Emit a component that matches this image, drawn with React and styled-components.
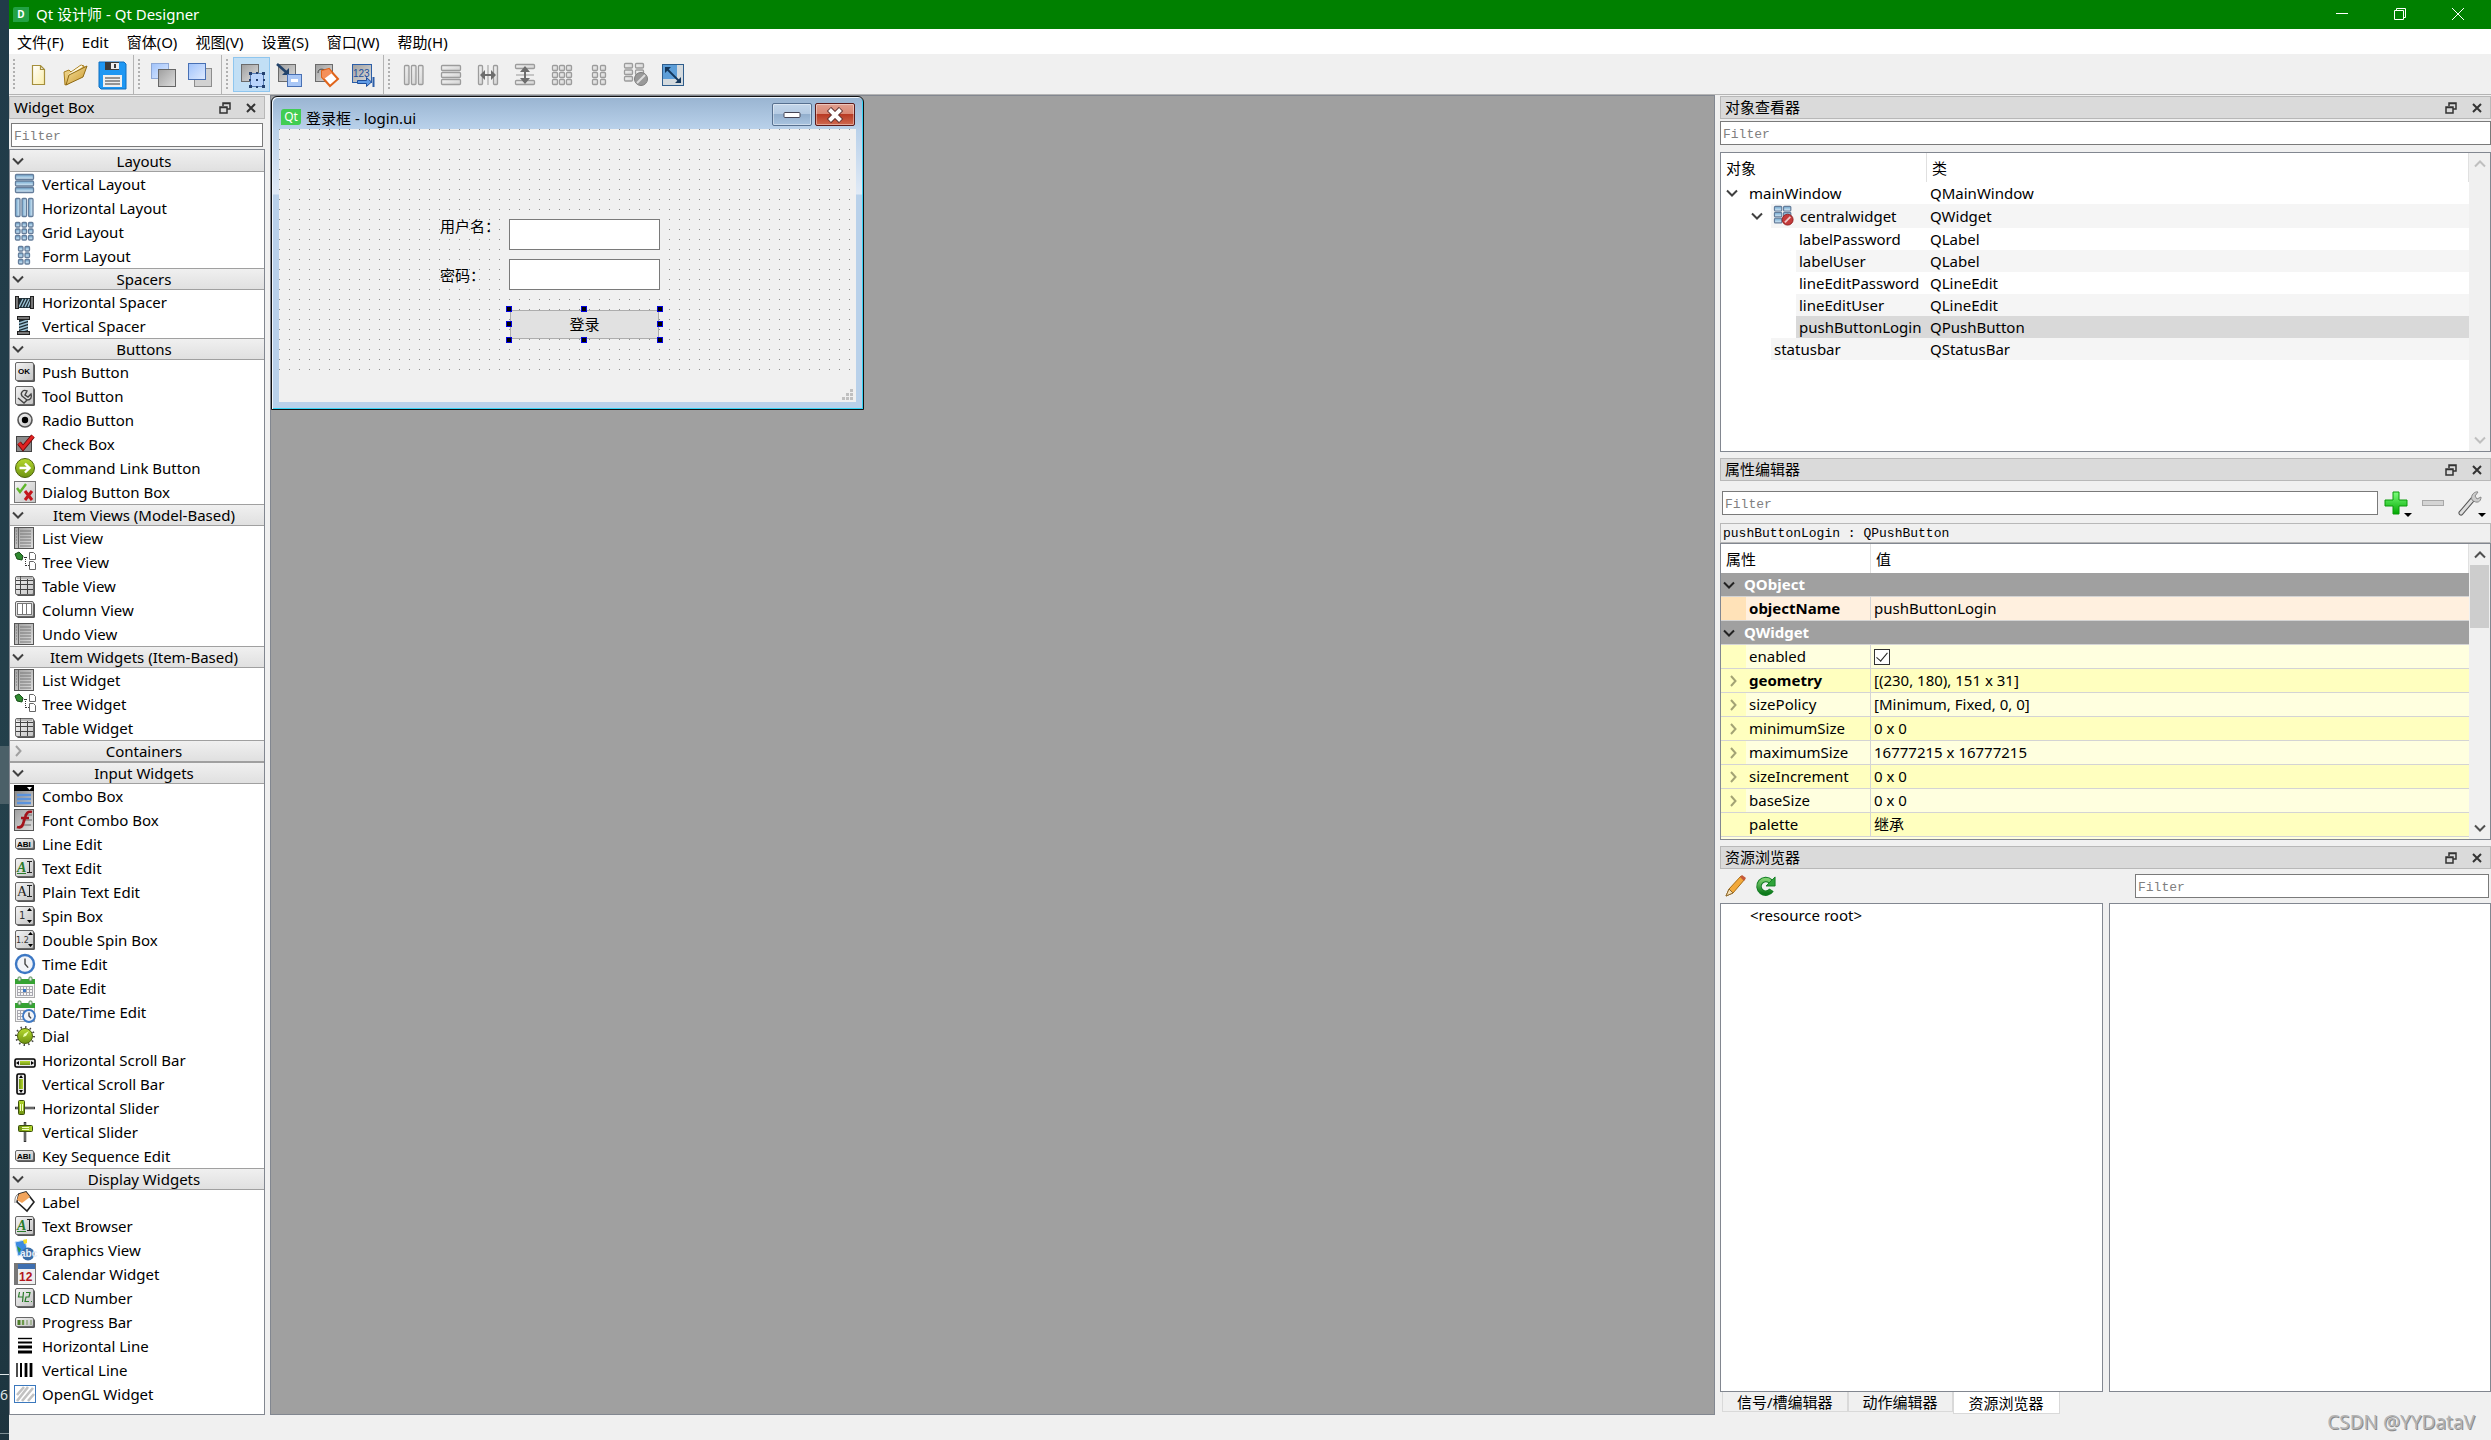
import React from "react";
import styled, { createGlobalStyle, css } from "styled-components";

const UI = `"Noto Sans", "Noto Sans CJK SC", sans-serif`;
const MONO = `"Liberation Mono", "Noto Sans CJK SC", monospace`;

const GlobalStyle = createGlobalStyle`
  * { box-sizing: border-box; }
  body { margin: 0; background: #f0f0f0; font: 15px/22px ${UI}; color: #000; }
  button, input { font: inherit; color: inherit; margin: 0; }
  button { border: 0; padding: 0; background: none; text-align: left; white-space: nowrap; }
  ul { list-style: none; margin: 0; padding: 0; }
  h2, h3 { margin: 0; font: inherit; }
  svg { display: block; flex: none; }
`;

/* ---------- icons ---------- */

const stops = (id, a, b, x2 = 0, y2 = 1) => (
  <linearGradient id={id} key={id} x1="0" y1="0" x2={x2} y2={y2}>
    <stop offset="0" stopColor={a} />
    <stop offset="1" stopColor={b} />
  </linearGradient>
);

const HiddenSvg = styled.svg`
  position: absolute;
  width: 0;
  height: 0;
`;

const Gradients = () => (
  <HiddenSvg aria-hidden="true">
    <defs>
      {stops("gBlue", "#6fa6ce", "#dcecf7")}
      {stops("gBlueH", "#6fa6ce", "#dcecf7", 1, 0)}
      {stops("gGrey", "#f4f4f4", "#c4c4c4", 1, 1)}
      {stops("gDark", "#7b7b7b", "#cfcfcf", 1, 1)}
      {stops("gPlate", "#9f9f9f", "#dedede", 1, 1)}
      {stops("gSoft", "#9fc2fb", "#e0ebfe", 1, 1)}
      {stops("gLime", "#b5d92f", "#6f9312")}
      {stops("gPaper", "#ffffff", "#fbeeaa", 1, 1)}
      {stops("gFolder", "#f7e3a0", "#c9962a", 1, 1)}
      {stops("gPlus", "#7dff7d", "#00a800")}
      {stops("gReload", "#7ccf6e", "#0e7a1c")}
      {stops("gOff", "#f6f6f6", "#d0d0d0", 1, 1)}
    </defs>
  </HiddenSvg>
);

const cells = (xs, ys, w, h, fill, stroke) =>
  xs.flatMap((x) =>
    ys.map((y) => (
      <rect key={`${x}-${y}`} x={x} y={y} width={w} height={h} rx="1" fill={fill} stroke={stroke} strokeWidth="1.300" />
    ))
  );

const Key = ({ y = 2, h = 18, children }) => (
  <>
    <rect x="3" y={y + 1} width="18" height={h} rx="1.5" fill="#555" />
    <rect x="1.5" y={y - 0.5} width="18" height={h} rx="1.5" fill="url(#gGrey)" stroke="#666" />
    {children}
  </>
);

const Txt = ({ x, y, s, f, c = "#000", w, i, children }) => (
  <text x={x} y={y} fontSize={s} fontFamily={f || "Liberation Sans"} fill={c} fontWeight={w} fontStyle={i}>
    {children}
  </text>
);

const Sheet = () => (
  <>
    <rect x="0.5" y="0.5" width="19" height="21" fill="url(#gPlate)" stroke="#555" />
    <path d="M4.5 1v20" stroke="#666" />
    <path d="M2 4h1M2 7h1M2 10h1M2 13h1M2 16h1M6 4h11M6 7h11M6 10h11M6 13h11M6 16h11M6 19h11" stroke="#777" />
  </>
);

const Calendar = () => (
  <>
    <rect x="1.5" y="3.5" width="19" height="17" fill="#f6f6f6" stroke="#aaa" />
    <rect x="1" y="2" width="20" height="5" fill="#35a333" />
    <rect x="4" y="0" width="3" height="4" rx="1" fill="#dff0df" stroke="#5a8a5a" />
    <rect x="15" y="0" width="3" height="4" rx="1" fill="#dff0df" stroke="#5a8a5a" />
    <path d="M3.500 9v10M6.500 9v10M9.500 9v10M12.500 9v10M15.500 9v10M18.500 9v10M3 9.500h16M3 12.500h16M3 15.500h16M3 18.500h16" stroke="#a8a8b0" />
  </>
);

const Clock = ({ cx = 11, cy = 11, r = 9 }) => (
  <>
    <circle cx={cx} cy={cy} r={r} fill="#f2f4f8" stroke="#3d78c4" strokeWidth={r > 7 ? 2.4 : 1.8} />
    <path d={`M${cx} ${cy - r * 0.6}V${cy}l${r * 0.35} ${r * 0.4}`} fill="none" stroke="#444" strokeWidth="1.4" />
  </>
);

const Slider = () => (
  <>
    <path d="M1 11h20" stroke="#333" strokeWidth="2.5" />
    <path d="M2 11h18" stroke="#999" />
    <rect x="4.500" y="3.500" width="6" height="14" rx="1" fill="url(#gLime)" stroke="#3b4f0c" />
    <path d="M6.500 7v7M8.500 7v7" stroke="#f2ffc2" />
  </>
);

const ScrollH = () => (
  <>
    <rect x="1" y="7" width="20" height="8" rx="1.500" fill="#e8e8e8" stroke="#000" strokeWidth="1.600" />
    <path d="M5 9v4l-3-2zM17 9v4l3-2z" fill="#000" />
    <rect x="6" y="9" width="10" height="4" fill="url(#gLime)" />
  </>
);

const Abi = () => (
  <Key y={6} h={10}>
    <Txt x={3} y={14} s={8} w={700}>ABI</Txt>
  </Key>
);

const Plate = () => <rect x="0.500" y="0.500" width="17" height="17" fill="url(#gPlate)" stroke="#6b6b6b" />;

const Off = "url(#gOff)";
const OffS = "#9c9c9c";
const BS = "#647d9b";

const ICONS = {
  vlayout: () => cells([1.5], [1.5, 8, 14.5], 18, 5, "url(#gBlue)", BS),
  hlayout: () => cells([1.5, 8, 14.5], [1.5], 4.5, 18, "url(#gBlueH)", BS),
  grid: () => cells([1.5, 8, 14.5], [1.5, 8, 14.5], 4.5, 4.5, "url(#gBlue)", BS),
  form: () => cells([4.5, 11], [1.5, 8, 14.5], 4.5, 4.5, "url(#gBlue)", BS),
  hspacer: () => (
    <>
      <path d="M4 7h13v10H4z" fill="#1c2b33" />
      <path d="M5 16l4-8M8 16l4-8M11 16l4-8M14 16l3-7" stroke="#9cc3d6" strokeWidth="1.4" />
      <rect x="1.500" y="5.500" width="3" height="12" fill="#777" stroke="#222" />
      <rect x="16.500" y="5.500" width="3" height="12" fill="#777" stroke="#222" />
    </>
  ),
  vspacer: () => (
    <>
      <path d="M5 4h9v13H5z" fill="#1c2b33" />
      <path d="M5 8l9-3M5 11l9-3M5 14l9-3M5 17l9-3" stroke="#9cc3d6" strokeWidth="1.4" />
      <rect x="3.500" y="1.500" width="12" height="3" fill="#777" stroke="#222" />
      <rect x="3.500" y="16.500" width="12" height="3" fill="#777" stroke="#222" />
    </>
  ),
  push: () => <Key><Txt x={4} y={13} s={8} w={700}>OK</Txt></Key>,
  tool: () => (
    <Key>
      <path d="M4 13l6 5 3-3-5-4M13 15c4 0 5-3 4-6l-3 3-3-2 2-4c-4-2-7 2-5 5" fill="#ddd" stroke="#444" strokeWidth="1.400" />
    </Key>
  ),
  radio: () => (
    <>
      <circle cx="11" cy="11" r="7" fill="url(#gGrey)" stroke="#555" strokeWidth="1.6" />
      <circle cx="11" cy="11" r="3.200" fill="#000" />
    </>
  ),
  check: () => (
    <>
      <rect x="2.500" y="3.500" width="15" height="15" fill="#8c8c8c" stroke="#444" />
      <path d="M5 10l4 5 10-12" fill="none" stroke="#6d0a0a" strokeWidth="4.600" />
      <path d="M5 10l4 5 10-12" fill="none" stroke="#e02222" strokeWidth="3" />
    </>
  ),
  command: () => (
    <>
      <circle cx="11" cy="11" r="9.500" fill="url(#gLime)" stroke="#4c620c" />
      <path d="M5.500 11h10M11 6.500l4.500 4.500-4.500 4.500" fill="none" stroke="#fff" strokeWidth="2.400" />
    </>
  ),
  dialog: () => (
    <>
      <rect x="0.500" y="0.500" width="21" height="21" fill="url(#gGrey)" stroke="#777" />
      <path d="M3 7l3 4 6-8" fill="none" stroke="#5fb52c" strokeWidth="2.400" />
      <path d="M11 10l7 9M18 10l-7 9" stroke="#c4161c" strokeWidth="3" />
    </>
  ),
  list: Sheet,
  tree: () => (
    <>
      <path d="M1 3l4-2 4 4-1 4-5-1z" fill="#2f8a2f" stroke="#174d17" />
      <path d="M11.500 6v9M8 6.500h6M12 14.500h3" stroke="#333" strokeDasharray="1 1" />
      <path d="M15.500 1.500h4l2 2v5h-6zM15.500 10.500h4l2 2v6h-6z" fill="#fff" stroke="#666" />
    </>
  ),
  table: () => (
    <Key>
      <path d="M2 5.500h17M2 9.500h17M2 14.500h17M6.500 1v18M13.500 4v15" stroke="#444" />
      <path d="M3 3h15" stroke="#888" />
    </Key>
  ),
  column: () => (
    <Key y={3} h={15}>
      <rect x="3.500" y="4.500" width="14" height="11" fill="#fff" stroke="#777" />
      <path d="M8.500 5v10M12.500 5v10" stroke="#777" />
    </Key>
  ),
  combo: () => (
    <>
      <rect x="0.500" y="0.500" width="19" height="21" fill="url(#gDark)" stroke="#555" />
      <path d="M0 0h20v6H0z" fill="#000" />
      <path d="M13 2h5l-2.500 3z" fill="#fff" />
      <path d="M3 10h14M3 14h14M3 18h14" stroke="#5b93dd" strokeWidth="2.400" />
    </>
  ),
  fontcombo: () => (
    <>
      <rect x="0.500" y="0.500" width="19" height="21" fill="url(#gPlate)" stroke="#555" />
      <path d="M10 6h8M8 11h10M9 16h8" stroke="#999" strokeWidth="2" />
      <path d="M18 3c-4-1-6 1-7 6l-2 6c-1 3-3 4-6 3M7 9h8" fill="none" stroke="#a3121a" strokeWidth="2.600" />
    </>
  ),
  line: Abi,
  text: () => (
    <Key>
      <Txt x={3} y={15} s={14} f="Liberation Serif" c="#2a7a2a" w={700} i="italic">A</Txt>
      <path d="M3 16.500h9" stroke="#2a7a2a" />
      <path d="M13 4.500h5M15.500 5v10M13 15.500h5" stroke="#222" />
    </Key>
  ),
  plain: () => (
    <Key>
      <Txt x={3} y={15} s={14} f="Liberation Serif" c="#222">A</Txt>
      <path d="M13 4.500h5M15.500 5v10M13 15.500h5" stroke="#222" />
    </Key>
  ),
  spin: () => (
    <Key>
      <Txt x={5} y={14} s={10} f="DejaVu Sans" c="#333">1</Txt>
      <path d="M13 6h5l-2.500-3zM13 15h5l-2.500 3z" />
    </Key>
  ),
  dspin: () => (
    <Key>
      <Txt x={2} y={14} s={8} f="DejaVu Sans" c="#333">1.2</Txt>
      <path d="M14 6h5l-2.500-3zM14 15h5l-2.500 3z" />
    </Key>
  ),
  time: () => <Clock />,
  date: () => (
    <>
      <Calendar />
      <rect x="9" y="12" width="3" height="3" fill="#3d78c4" />
    </>
  ),
  datetime: () => (
    <>
      <Calendar />
      <Clock cx={15} cy={15} r={6} />
    </>
  ),
  dial: () => (
    <>
      <circle cx="11" cy="11" r="9" fill="none" stroke="#444" strokeWidth="2" strokeDasharray="1.400 3.300" />
      <circle cx="11" cy="11" r="7.500" fill="url(#gLime)" stroke="#4c620c" />
      <path d="M9 12l1-3 5-3-3 5z" fill="#eaffb0" />
    </>
  ),
  hscroll: () => <g transform="translate(0 3)"><ScrollH /></g>,
  vscroll: () => <g transform="rotate(90 11 11) translate(0 4)"><ScrollH /></g>,
  hslider: Slider,
  vslider: () => <g transform="rotate(90 11 11)"><Slider /></g>,
  label: () => (
    <>
      <path d="M1 12C0 4 5 1 9 3" fill="none" stroke="#888" />
      <path d="M5 3l7-2 8 10-7 9-10-9z" fill="#fff" stroke="#222" strokeWidth="1.600" />
      <path d="M5 3l7-2 4 5-8 6-5-3z" fill="#f2a45c" />
    </>
  ),
  graphics: () => (
    <>
      <path d="M1 3l10-2 3 13-10 3z" fill="#3c8be0" stroke="#c9dff6" />
      <path d="M9 1l4-1v4l-3 1z" fill="#f4dc2c" />
      <path d="M3 7l4 3-2 4z" fill="#2f9a3a" />
      <circle cx="14" cy="15" r="6.500" fill="#3a6ea8" />
      <Txt x={6} y={18} s={10} c="#e8f0fa" w={700}>abc</Txt>
    </>
  ),
  calendar: () => (
    <>
      <rect x="0.500" y="0.500" width="21" height="21" fill="#efefef" stroke="#777" />
      <path d="M1 1h3v20H1z" fill="#777" />
      <path d="M4 1h17v5H4z" fill="#3e6fb0" />
      <Txt x={5} y={18} s={12} c="#b3161c" w={700}>12</Txt>
    </>
  ),
  lcd: () => (
    <Key>
      <path d="M5.500 5l-1 5h5M9.500 5l-1 10M12 5.500h4l-1 4.500h-3l-1 4.500h4M17 14.500h1" fill="none" stroke="#2a7a2a" strokeWidth="1.200" />
    </Key>
  ),
  progress: () => (
    <Key y={7} h={9}>
      <path d="M5 9v5" stroke="#4e7d2a" strokeWidth="3" />
      <path d="M9 9v5" stroke="#6d9a4c" strokeWidth="2.400" />
      <path d="M13 9v5M17 9v5" stroke="#a5b598" strokeWidth="2" />
    </Key>
  ),
  hline: () => (
    <>
      <path d="M4 3.500h14" stroke="#000" strokeWidth="1.400" />
      <path d="M4 7.500h14" stroke="#000" strokeWidth="2" />
      <path d="M4 12h14M4 17h14" stroke="#000" strokeWidth="2.800" />
    </>
  ),
  vline: () => (
    <>
      <path d="M3 4v14" stroke="#000" strokeWidth="1.400" />
      <path d="M7 4v14" stroke="#000" strokeWidth="2" />
      <path d="M12 4v14M17 4v14" stroke="#000" strokeWidth="2.800" />
    </>
  ),
  opengl: () => (
    <>
      <rect x="0.500" y="2.500" width="21" height="17" fill="#fff" stroke="#3b78bd" />
      <path d="M3 12l7-8M3 18L14 4M8 18L19 5M14 18l6-7" stroke="#c2c2c2" strokeWidth="2.600" />
    </>
  ),

  new: () => (
    <path d="M4.500 1.500h8l4 4v15h-12zM12.500 1.500v4h4" fill="url(#gPaper)" stroke="#a58f3c" strokeWidth="1.200" />
  ),
  open: () => (
    <>
      <path d="M-1 8l5-2 2 2 10-7 3 1v4L3 20l-3 1z" fill="url(#gFolder)" stroke="#a67c1c" />
      <path d="M4 11l13-9" stroke="#fffbe8" strokeWidth="2" />
      <path d="M1 21l3-10 18-9-4 11z" fill="url(#gFolder)" stroke="#8f6a14" />
    </>
  ),
  save: () => (
    <>
      <path d="M-3-2h25l2 2v25H-1l-2-2z" fill="#1e97f3" stroke="#0f6fc0" />
      <path d="M3-2h14v8H3z" fill="#3b3b3b" />
      <path d="M9-1h8v6H9z" fill="#eee" />
      <path d="M12 0h2v4h-2z" fill="#3b3b3b" />
      <path d="M1 11h19v12H1z" fill="#efefef" />
      <path d="M3 14h15M3 17h15M3 20h15" stroke="#777" strokeWidth="1.400" />
    </>
  ),
  back: () => (
    <>
      <rect x="-1.500" y="-0.500" width="17" height="15" fill="url(#gSoft)" stroke="#8ea8d6" />
      <rect x="5.500" y="5.500" width="17" height="17" fill="url(#gPlate)" stroke="#666" />
    </>
  ),
  front: () => (
    <>
      <rect x="4.500" y="4.500" width="17" height="18" fill="#d2d2d2" stroke="#8d8d8d" />
      <rect x="-1.500" y="-0.500" width="17" height="16" fill="url(#gSoft)" stroke="#4870b4" />
    </>
  ),
  editWidgets: () => (
    <>
      <Plate />
      <rect x="9.500" y="9.500" width="13" height="13" fill="#b9d4fb" stroke="#5a7fb8" />
      <path d="M8 8h3v3H8zM15 8h2v2h-2zM21 8h3v3h-3zM8 21h3v3H8zM15 22h2v2h-2zM21 21h3v3h-3zM8 15h2v2H8zM22 15h2v2h-2zM15 15h2v2h-2z" fill="#23406e" />
    </>
  ),
  signals: () => (
    <>
      <Plate />
      <path d="M-1 0l9 8" stroke="#22436b" strokeWidth="2.600" />
      <path d="M11 11V4L4 11z" fill="#22436b" />
      <rect x="9.500" y="10.500" width="14" height="12" fill="#a9c7f6" stroke="#4870b4" />
      <path d="M13 15h7v3h-7z" fill="#fff" />
    </>
  ),
  buddies: () => (
    <>
      <Plate />
      <path d="M3 9c0-5 5-4 7-3" fill="none" stroke="#444" />
      <path d="M7 7l7-2 9 10-8 7-8-9z" fill="#fff" stroke="#e0641a" strokeWidth="2" />
      <path d="M7 7l7-2 3 4-8 6-2-2z" fill="#f4905a" />
    </>
  ),
  tabOrder: () => (
    <>
      <rect x="0.500" y="0.500" width="19" height="18" fill="url(#gPlate)" stroke="#2d5fa8" />
      <Txt x={1} y={13} s={10} c="#1f4f9c">123</Txt>
      <path d="M5.500 16.500h9v-3l5 4.500-5 4.500v-3h-9z" fill="#5f9be6" stroke="#1f4f9c" />
      <path d="M21.500 13v10" stroke="#2d5fa8" strokeWidth="2" />
    </>
  ),
  offH: () => cells([1.5, 8.5, 15.5], [1.5], 4.5, 19, Off, OffS),
  offV: () => cells([1.5], [1.5, 8.5, 15.5], 19, 5, Off, OffS),
  offSplitH: () => (
    <>
      {cells([1.5, 16.5], [1.5], 4, 19, Off, OffS)}
      <path d="M11 1v20" stroke="#999" />
      <path d="M3 11l5-5v4h6V6l5 5-5 5v-4H8v4z" fill="#6d6d6d" />
    </>
  ),
  offSplitV: () => (
    <>
      {cells([1.5], [0.5, 16.5], 19, 4, Off, OffS)}
      <path d="M2 11h18" stroke="#999" />
      <path d="M11 2l5 6h-4v6h4l-5 6-5-6h4V8H6z" fill="#6d6d6d" />
    </>
  ),
  offGrid: () => cells([1.5, 8.5, 15.5], [1.5, 8.5, 15.5], 5, 5, Off, OffS),
  offForm: () => cells([4.5, 12.5], [1.5, 8.5, 15.5], 5, 5, Off, OffS),
  breakLayout: () => (
    <>
      {cells([-0.5, 10.5], [-0.5, 6, 12.5], 8, 4.5, Off, OffS)}
      <circle cx="16" cy="15" r="6.500" fill="#999" stroke="#7d7d7d" />
      <path d="M12 19l8-8" stroke="#ddd" strokeWidth="2" />
    </>
  ),
  adjust: () => (
    <>
      <rect x="0.500" y="0.500" width="21" height="21" fill="#d4dade" stroke="#2f5d8c" />
      <rect x="1" y="1" width="14" height="14" fill="#5d9ed8" />
      <path d="M5 5l12 12" stroke="#14375c" strokeWidth="1.800" />
      <path d="M3 3h6l-6 6zM19 19h-6l6-6z" fill="#14375c" />
    </>
  ),
  broken: () => (
    <>
      {cells([0.5, 10.5], [0.5, 7, 13.5], 8, 5, "url(#gBlue)", BS)}
      <circle cx="15" cy="15" r="6" fill="#c43a3a" stroke="#8c1c1c" />
      <path d="M12 18l6-6" stroke="#f0c8c8" strokeWidth="2" />
    </>
  ),
  plus: () => <path d="M8 0h6v8h8v6h-8v8H8v-8H0V8h8z" fill="url(#gPlus)" stroke="#0a9a0a" />,
  minus: () => <rect x="0.500" y="8.500" width="21" height="5" fill="#d4d4d4" stroke="#a8a8a8" />,
  wrench: () => (
    <>
      <path d="M2 21L14 7" stroke="#555" strokeWidth="5" strokeLinecap="round" />
      <path d="M2 21L14 7" stroke="#ddd" strokeWidth="3" strokeLinecap="round" />
      <path d="M13 8c-2-5 3-9 6-8l-3 4 2 3 4-2c0 5-4 7-9 3z" fill="#ccc" stroke="#8a8a8a" />
    </>
  ),
  pencil: () => (
    <>
      <path d="M1 21l3-7L16 1l4 3L8 18z" fill="#f2a93b" stroke="#a86c12" />
      <path d="M1 21l3-7 4 4z" fill="#f5dfb4" stroke="#8d6b34" />
      <path d="M15 2l2-2 4 3-2 3z" fill="#c55a3a" />
    </>
  ),
  reload: () => (
    <>
      <path d="M17 15.500A7.500 7.500 0 1 1 16 6" fill="none" stroke="#0f7a20" strokeWidth="6" />
      <path d="M17 15.500A7.500 7.500 0 1 1 16 6" fill="none" stroke="url(#gReload)" strokeWidth="4" />
      <path d="M21 1v10H11z" fill="#2fa33a" stroke="#0f7a20" />
    </>
  ),
};

const Icon = ({ name, size = 22 }) => {
  const Body = ICONS[name];
  return (
    <svg width={size} height={size} viewBox="0 0 22 22" overflow="visible" aria-hidden="true">
      <Body />
    </svg>
  );
};

const Chevron = ({ dir = "down", color = "#404040", size = 12 }) => {
  const d = { down: "M1 3.500l5 5 5-5", up: "M1 8.500l5-5 5 5", right: "M4 1l4.500 5L4 11" }[dir];
  return (
    <svg width={size} height={size} viewBox="0 0 12 12" aria-hidden="true">
      <path d={d} fill="none" stroke={color} strokeWidth="2" />
    </svg>
  );
};

/* ---------- shell ---------- */

const Screen = styled.div`
  display: flex;
  height: 100vh;
  min-height: 1440px;
  overflow: hidden;
`;

const DesktopEdge = styled.div`
  width: 9px;
  flex: none;
  overflow: hidden;
  display: flex;
  flex-direction: column;
  justify-content: flex-end;
  padding-bottom: 6px;
  background: linear-gradient(#4b6068, #4b6068) 0 746px / 9px 58px no-repeat, linear-gradient(#213b49, #24414b 70%, #1d343f);
`;

const EdgeClock = styled.div`
  height: 60px;
  border-top: 1px solid #dfe6e8;
  border-bottom: 1px solid #7d8f95;
  color: #dfe6e8;
  font-size: 14px;
  line-height: 40px;
  text-align: right;
  padding-right: 2px;
`;

const Window = styled.div`
  flex: 1;
  min-width: 0;
  display: flex;
  flex-direction: column;
  position: relative;
`;

const TitleBar = styled.header`
  height: 29px;
  flex: none;
  display: flex;
  align-items: center;
  padding: 0 4px 1px 4px;
  background: #008000;
  color: #fff;
`;

const AppMark = styled.span`
  width: 16px;
  height: 15px;
  margin-right: 7px;
  border-radius: 2px 0 2px 0;
  background: #22a244;
  font: 700 10px/15px ${UI};
  text-align: center;
`;

const AppTitle = styled.h1`
  flex: 1;
  margin: 0;
  font: inherit;
`;

const CaptionButton = styled.button`
  width: 58px;
  height: 28px;
  display: grid;
  place-items: center;
`;

const MenuBar = styled.nav`
  height: 26px;
  flex: none;
  display: flex;
  padding-left: 8px;
  gap: 18px;
  background: #fff;
  border-bottom: 1px solid #f0f0f0;
  line-height: 26px;
`;

const ToolRow = styled.div`
  height: 40px;
  flex: none;
  display: flex;
  background: #f0f0f0;
  border-bottom: 1px solid #b4b4b4;
`;

const ToolGroup = styled.div`
  display: flex;
  align-items: center;
  padding-right: 2px;
  border-right: ${(p) => (p.$last ? "0" : "1px solid #b4b4b4")};
`;

const Grip = styled.span`
  width: 2px;
  height: 31px;
  margin: 0 5px 0 4px;
  background: repeating-linear-gradient(#b0b0b0 0 2px, transparent 2px 4px);
`;

const ToolButton = styled.button`
  width: 37px;
  height: 35px;
  display: grid;
  place-items: center;
  ${(p) => p.$on && css`background: #c2dff5; border: 1px solid #8fc6ef;`}
`;

const Body = styled.div`
  flex: 1;
  min-height: 0;
  display: flex;
`;

const StatusBar = styled.footer`
  height: 25px;
  flex: none;
`;

const Watermark = styled.div`
  position: absolute;
  right: 16px;
  bottom: 5px;
  font-size: 19px;
  line-height: 26px;
  color: #b4b4b4;
  text-shadow: 1px 1px 0 #8a8a8a;
`;

/* ---------- docks ---------- */

const DockTitleBar = styled.div`
  height: 23px;
  flex: none;
  display: flex;
  align-items: center;
  gap: 10px;
  padding: 0 5px 0 4px;
  background: #dadada;
  border: 1px solid #b8b8b8;
`;

const DockName = styled.h2`
  flex: 1;
  line-height: 21px;
`;

const DockButton = styled.button`
  width: 16px;
  height: 16px;
  display: grid;
  place-items: center;
`;

const DockHeader = ({ title }) => (
  <DockTitleBar>
    <DockName>{title}</DockName>
    <DockButton aria-label="Float">
      <svg width="12" height="12" viewBox="0 0 12 12">
        <path d="M4 4V1h7v6H8M4 1.500h7" fill="none" stroke="#333" strokeWidth="1.500" />
        <path d="M1 5h7v6H1zM1 5.500h7" fill="none" stroke="#333" strokeWidth="1.500" />
      </svg>
    </DockButton>
    <DockButton aria-label="Close">
      <svg width="10" height="10" viewBox="0 0 10 10">
        <path d="M1 1l8 8M9 1L1 9" stroke="#333" strokeWidth="2" />
      </svg>
    </DockButton>
  </DockTitleBar>
);

const Filter = styled.input`
  height: 24px;
  min-width: 0;
  flex: ${(p) => (p.$grow ? 1 : "none")};
  padding: 2px 2px 0;
  border: 1px solid #7a7a7a;
  border-radius: 0;
  background: #fff;
  font: 13px/20px ${MONO};
  outline: 0;
  &::placeholder { color: #808080; opacity: 1; }
`;

const Frame = styled.div`
  border: 1px solid #828790;
  background: #fff;
  overflow: hidden;
`;

const WidgetBox = styled.aside`
  width: 256px;
  flex: none;
  padding-top: 1px;
  display: flex;
  flex-direction: column;
`;

const FilterSlot = styled.div`
  display: flex;
  padding: 4px 2px 2px;
`;

const WidgetFrame = styled(Frame)`
  flex: 1;
`;

const SectionHeader = styled.button`
  width: 100%;
  height: 22px;
  display: flex;
  align-items: center;
  padding-left: 2px;
  background: linear-gradient(#f0f0f0, #e0e0e0);
  border-bottom: 1px solid #a0a0a0;
  border-top: ${(p) => (p.$first ? "0" : "1px solid #a0a0a0")};
`;

const SectionName = styled.span`
  flex: 1;
  text-align: center;
  line-height: 20px;
`;

const Entry = styled.button`
  width: 100%;
  height: 24px;
  display: flex;
  align-items: center;
  gap: 6px;
  padding-left: 4px;
  line-height: 24px;
`;

/* ---------- form canvas ---------- */

const Mdi = styled.main`
  flex: 1;
  min-width: 0;
  margin: 0 5px;
  background: #a0a0a0;
  border: 1px solid #828790;
  position: relative;
`;

const SubWindow = styled.section`
  position: absolute;
  left: 0;
  top: 0;
  width: 593px;
  height: 314px;
  padding: 0 7px 7px;
  border: 1px solid #111;
  border-radius: 6px 6px 0 0;
  background: linear-gradient(#99b4d1, #b9d1ea 32px, #e0eaf6 97px, #b9d1ea 98px);
  box-shadow: inset 1px 1px 0 #f0f7ff, inset -1px -1px 0 #35d3f5;
`;

const SubTitle = styled.div`
  height: 32px;
  display: flex;
  align-items: flex-start;
  gap: 3px;
  padding: 6px 1px 0 2px;
`;

const QtMark = styled.span`
  width: 20px;
  height: 16px;
  margin: 6px 2px 0 0;
  border-radius: 3px 0 3px 0;
  background: #41cd52;
  color: #fff;
  font: 12px/16px ${UI};
  text-align: center;
`;

const SubName = styled.h2`
  flex: 1;
  line-height: 30px;
`;

const SubButton = styled.button`
  width: 40px;
  height: 23px;
  display: grid;
  place-items: center;
  border: 1px solid ${(p) => (p.$close ? "#5b1a1a" : "#57708f")};
  border-radius: 2px;
  box-shadow: inset 0 0 0 1px rgba(255, 255, 255, 0.4);
  background: ${(p) =>
    p.$close
      ? "linear-gradient(#e0a090, #d98773 48%, #b83a24 50%, #cf6a50)"
      : "linear-gradient(#c3d6ea, #b4cae2 48%, #93afcd 50%, #a9c4e0)"};
`;

const Canvas = styled.div`
  height: 273px;
  position: relative;
  background: #f0f0f0;
`;

const DotGrid = styled.div`
  height: 250px;
  background: linear-gradient(90deg, transparent 1px, #f0f0f0 1px) 0 0 / 10px 10px,
    linear-gradient(transparent 1px, #f0f0f0 1px) 0 0 / 10px 10px, #8c8c8c;
`;

const placed = css`
  position: absolute;
  left: ${(p) => p.$x}px;
  top: ${(p) => p.$y}px;
`;

const FormLabel = styled.label`
  ${placed}
  line-height: 16px;
`;

const FormInput = styled.input`
  ${placed}
  width: 151px;
  height: 31px;
  border: 1px solid #7a7a7a;
  background: #fff;
`;

const FormButton = styled.button`
  ${placed}
  width: 149px;
  height: 29px;
  padding-bottom: 2px;
  border: 1px solid #adadad;
  background: #e1e1e1;
  text-align: center;
`;

const Handle = styled.span`
  ${placed}
  width: 6px;
  height: 6px;
  background: #000;
  border: 1px solid #0000e0;
`;

const SizeGrip = styled.svg`
  position: absolute;
  right: 3px;
  bottom: 2px;
`;

/* ---------- right column ---------- */

const RightColumn = styled.aside`
  width: 771px;
  flex: none;
  padding-top: 1px;
  display: flex;
  flex-direction: column;
`;

const Dock = styled.section`
  display: flex;
  flex-direction: column;
  flex: ${(p) => (p.$grow ? 1 : "none")};
  min-height: 0;
  margin-bottom: ${(p) => (p.$grow ? 0 : 6)}px;
`;

const InspectorFilter = styled.div`
  display: flex;
  padding: 2px 0 7px;
`;

const ScrollFrame = styled(Frame)`
  display: flex;
  height: ${(p) => p.$h}px;
`;

const TableArea = styled.div`
  flex: 1;
  min-width: 0;
`;

const ScrollTrack = styled.div`
  width: 21px;
  flex: none;
  display: flex;
  flex-direction: column;
  align-items: center;
  padding: 5px 0;
  background: #f0f0f0;
`;

const Thumb = styled.div`
  width: 19px;
  height: 63px;
  margin-top: 4px;
  background: #cdcdcd;
`;

const Spring = styled.div`
  flex: 1;
`;

const DataTable = styled.table`
  width: 100%;
  table-layout: fixed;
  border-collapse: separate;
  border-spacing: 0;
  td, th { padding: 0; }
`;

const HeadCell = styled.th`
  height: 29px;
  font-weight: 400;
  text-align: left;
  border-right: 1px solid #e0e0e0;
  & > span { padding-left: 5px; }
`;

const TreeRow = styled.tr`
  height: ${(p) => p.$h || 22}px;
  line-height: ${(p) => p.$h || 22}px;
  --tint: ${(p) => p.$tint};
`;

const TreeName = styled.div`
  display: flex;
  height: 100%;
  padding-left: ${(p) => p.$depth * 25}px;
`;

const Branch = styled.span`
  width: 25px;
  display: grid;
  place-items: center;
  padding-right: 3px;
`;

const TreeText = styled.span`
  flex: 1;
  display: flex;
  align-items: center;
  gap: 6px;
  padding-left: 3px;
  white-space: nowrap;
  background: var(--tint);
`;

const TreeClass = styled.td`
  && { padding-left: 3px; }
  background: var(--tint);
`;

const PropToolbar = styled.div`
  display: flex;
  align-items: center;
  gap: 7px;
  padding: 10px 10px 8px 2px;
`;

const IconButton = styled.button`
  width: ${(p) => p.$w || 22}px;
  height: 24px;
  display: grid;
  place-items: center;
  position: relative;
  margin-left: ${(p) => p.$gap || 0}px;
`;

const DropMark = styled.span`
  position: absolute;
  right: -5px;
  bottom: -2px;
  border: 4px solid transparent;
  border-top-color: #000;
  border-bottom: 0;
`;

const ObjectLine = styled.div`
  height: 20px;
  padding-left: 2px;
  border: 1px solid #b8b8b8;
  font: 13px/19px ${MONO};
`;

const PropRow = styled.tr`
  height: 24px;
  line-height: 23px;
`;

const GroupCell = styled.td`
  background: #a0a0a0;
  border-bottom: 1px solid #d4d4d4;
  color: #fff;
  font-weight: 700;
`;

const Inline = styled.div`
  display: flex;
  align-items: center;
  gap: 9px;
  padding-left: ${(p) => p.$pad || 0}px;
  height: 23px;
`;

const PropName = styled.td`
  background: linear-gradient(90deg, ${(p) => p.$edge} 25px, ${(p) => p.$tint} 25px);
  border-bottom: 1px solid #d4d4d4;
  border-right: 1px solid #d4d4d4;
  font-weight: ${(p) => (p.$bold ? 700 : 400)};
`;

const PropInner = styled.div`
  display: flex;
  height: 23px;
`;

const PropArrow = styled.span`
  width: 28px;
  display: grid;
  place-items: center;
  padding-right: 4px;
`;

const PropValue = styled.td`
  && { padding-left: 3px; }
  background: ${(p) => p.$tint};
  border-bottom: 1px solid #d4d4d4;
`;

const CheckInput = styled.input`
  appearance: none;
  display: block;
  width: 16px;
  height: 16px;
  border: 1px solid #333;
  background: #fff;
  position: relative;
  &:checked::after {
    content: "";
    position: absolute;
    left: 4px;
    top: 0;
    width: 5px;
    height: 10px;
    border: solid #222;
    border-width: 0 1px 1px 0;
    transform: rotate(40deg);
  }
`;

const PartialRow = styled.tr`
  height: 3px;
  background: #ffffdf;
`;

const ResToolbar = styled.div`
  height: 34px;
  display: flex;
  align-items: center;
  padding: 0 2px 0 5px;
  gap: 8px;
`;

const ResFilterSlot = styled.div`
  display: flex;
  width: 354px;
  margin-left: auto;
`;

const Panes = styled.div`
  flex: 1;
  min-height: 0;
  display: flex;
  gap: 6px;
`;

const Pane = styled(Frame)`
  flex: ${(p) => p.$flex} 1 0;
  padding: 0 0 0 29px;
`;

const Tabs = styled.div`
  height: 23px;
  flex: none;
  display: flex;
  align-items: flex-start;
  padding-left: 2px;
`;

const Tab = styled.button`
  height: ${(p) => (p.$on ? 22 : 20)}px;
  padding: 0 ${(p) => (p.$on ? 15 : 14)}px;
  border: 1px solid #d9d9d9;
  border-top: 0;
  background: ${(p) => (p.$on ? "#fff" : "#f0f0f0")};
  line-height: ${(p) => (p.$on ? 20 : 18)}px;
`;

/* ---------- data ---------- */

const SECTIONS = [
  ["Layouts", [["vlayout", "Vertical Layout"], ["hlayout", "Horizontal Layout"], ["grid", "Grid Layout"], ["form", "Form Layout"]]],
  ["Spacers", [["hspacer", "Horizontal Spacer"], ["vspacer", "Vertical Spacer"]]],
  ["Buttons", [["push", "Push Button"], ["tool", "Tool Button"], ["radio", "Radio Button"], ["check", "Check Box"], ["command", "Command Link Button"], ["dialog", "Dialog Button Box"]]],
  ["Item Views (Model-Based)", [["list", "List View"], ["tree", "Tree View"], ["table", "Table View"], ["column", "Column View"], ["list", "Undo View"]]],
  ["Item Widgets (Item-Based)", [["list", "List Widget"], ["tree", "Tree Widget"], ["table", "Table Widget"]]],
  ["Containers", []],
  ["Input Widgets", [["combo", "Combo Box"], ["fontcombo", "Font Combo Box"], ["line", "Line Edit"], ["text", "Text Edit"], ["plain", "Plain Text Edit"], ["spin", "Spin Box"], ["dspin", "Double Spin Box"], ["time", "Time Edit"], ["date", "Date Edit"], ["datetime", "Date/Time Edit"], ["dial", "Dial"], ["hscroll", "Horizontal Scroll Bar"], ["vscroll", "Vertical Scroll Bar"], ["hslider", "Horizontal Slider"], ["vslider", "Vertical Slider"], ["line", "Key Sequence Edit"]]],
  ["Display Widgets", [["label", "Label"], ["text", "Text Browser"], ["graphics", "Graphics View"], ["calendar", "Calendar Widget"], ["lcd", "LCD Number"], ["progress", "Progress Bar"], ["hline", "Horizontal Line"], ["vline", "Vertical Line"], ["opengl", "OpenGL Widget"]]],
];

const MENUS = ["文件(F)", "Edit", "窗体(O)", "视图(V)", "设置(S)", "窗口(W)", "帮助(H)"];

const TOOLS = [
  ["new", "open", "save"],
  ["back", "front"],
  ["editWidgets", "signals", "buddies", "tabOrder"],
  ["offH", "offV", "offSplitH", "offSplitV", "offGrid", "offForm", "breakLayout", "adjust"],
];

const OBJECTS = [
  { name: "mainWindow", cls: "QMainWindow", depth: 0, open: true },
  { name: "centralwidget", cls: "QWidget", depth: 1, open: true, icon: "broken", h: 24 },
  { name: "labelPassword", cls: "QLabel", depth: 2 },
  { name: "labelUser", cls: "QLabel", depth: 2 },
  { name: "lineEditPassword", cls: "QLineEdit", depth: 2 },
  { name: "lineEditUser", cls: "QLineEdit", depth: 2 },
  { name: "pushButtonLogin", cls: "QPushButton", depth: 2, selected: true },
  { name: "statusbar", cls: "QStatusBar", depth: 1 },
];

const PROPS = [
  { group: "QObject" },
  { name: "objectName", value: "pushButtonLogin", bold: true, peach: true },
  { group: "QWidget" },
  { name: "enabled", check: true },
  { name: "geometry", value: "[(230, 180), 151 x 31]", bold: true, sub: true },
  { name: "sizePolicy", value: "[Minimum, Fixed, 0, 0]", sub: true },
  { name: "minimumSize", value: "0 x 0", sub: true },
  { name: "maximumSize", value: "16777215 x 16777215", sub: true },
  { name: "sizeIncrement", value: "0 x 0", sub: true },
  { name: "baseSize", value: "0 x 0", sub: true },
  { name: "palette", value: "继承" },
];

const HANDLES = [[227, 177], [302, 177], [378, 177], [227, 192], [378, 192], [227, 208], [302, 208], [378, 208]];

const propTint = (row, i) => {
  if (row.peach) return ["#ffe2b8", "#fff0df"];
  return ["#ffffbf", i % 2 ? "#ffffdf" : "#ffffbf"];
};

/* ---------- parts ---------- */

const Scroll = ({ color, thumb }) => (
  <ScrollTrack>
    <Chevron dir="up" color={color} />
    {thumb && <Thumb />}
    <Spring />
    <Chevron color={color} />
  </ScrollTrack>
);

const WidgetPalette = () => (
  <WidgetBox>
    <DockHeader title="Widget Box" />
    <FilterSlot>
      <Filter $grow placeholder="Filter" aria-label="Filter widgets" />
    </FilterSlot>
    <WidgetFrame>
      {SECTIONS.map(([name, items], i) => (
        <section key={name}>
          <h3>
            <SectionHeader $first={i === 0} aria-expanded={items.length > 0}>
              <Chevron dir={items.length ? "down" : "right"} color={items.length ? "#404040" : "#a0a0a0"} />
              <SectionName>{name}</SectionName>
            </SectionHeader>
          </h3>
          <ul>
            {items.map(([icon, label]) => (
              <li key={label}>
                <Entry>
                  <Icon name={icon} />
                  {label}
                </Entry>
              </li>
            ))}
          </ul>
        </section>
      ))}
    </WidgetFrame>
  </WidgetBox>
);

const FormWindow = () => (
  <SubWindow>
    <SubTitle>
      <QtMark>Qt</QtMark>
      <SubName>登录框 - login.ui</SubName>
      <SubButton aria-label="Minimize form">
        <svg width="18" height="8" viewBox="0 0 18 8">
          <rect x="1" y="1.500" width="16" height="5" rx="1" fill="#fff" stroke="#445" />
        </svg>
      </SubButton>
      <SubButton $close aria-label="Close form">
        <svg width="18" height="16" viewBox="0 0 18 16">
          <path d="M3 2l12 12M15 2L3 14" stroke="#5a3030" strokeWidth="6" />
          <path d="M3.500 2.500l11 11M14.500 2.500l-11 11" stroke="#fff" strokeWidth="4" />
        </svg>
      </SubButton>
    </SubTitle>
    <Canvas>
      <DotGrid />
      <FormLabel htmlFor="user" $x={161} $y={89}>用户名：</FormLabel>
      <FormInput id="user" $x={230} $y={90} />
      <FormLabel htmlFor="password" $x={161} $y={138}>密码：</FormLabel>
      <FormInput id="password" type="password" $x={230} $y={130} />
      <FormButton $x={231} $y={181}>登录</FormButton>
      {HANDLES.map(([x, y]) => (
        <Handle key={`${x}-${y}`} $x={x} $y={y} />
      ))}
      <SizeGrip width="11" height="11" viewBox="0 0 11 11">
        <path d="M8 0h3v3H8zM8 4h3v3H8zM4 4h3v3H4zM8 8h3v3H8zM4 8h3v3H4zM0 8h3v3H0z" fill="#c0c0c0" />
      </SizeGrip>
    </Canvas>
  </SubWindow>
);

const ObjectInspector = () => (
  <Dock>
    <DockHeader title="对象查看器" />
    <InspectorFilter>
      <Filter $grow placeholder="Filter" aria-label="Filter objects" />
    </InspectorFilter>
    <ScrollFrame $h={300}>
      <TableArea>
        <DataTable>
          <colgroup>
            <col width="206" />
            <col />
          </colgroup>
          <thead>
            <tr>
              <HeadCell><span>对象</span></HeadCell>
              <HeadCell><span>类</span></HeadCell>
            </tr>
          </thead>
          <tbody>
            {OBJECTS.map((o, i) => (
              <TreeRow key={o.name} $h={o.h} $tint={o.selected ? "#d9d9d9" : i % 2 ? "#f5f5f5" : "#fff"}>
                <td>
                  <TreeName $depth={o.depth}>
                    <Branch>{o.open && <Chevron />}</Branch>
                    <TreeText>
                      {o.icon && <Icon name={o.icon} size={20} />}
                      {o.name}
                    </TreeText>
                  </TreeName>
                </td>
                <TreeClass>{o.cls}</TreeClass>
              </TreeRow>
            ))}
          </tbody>
        </DataTable>
      </TableArea>
      <Scroll color="#bfbfbf" />
    </ScrollFrame>
  </Dock>
);

const PropertyEditor = () => (
  <Dock>
    <DockHeader title="属性编辑器" />
    <PropToolbar>
      <Filter $grow placeholder="Filter" aria-label="Filter properties" />
      <IconButton aria-label="Add dynamic property">
        <Icon name="plus" />
        <DropMark />
      </IconButton>
      <IconButton aria-label="Remove dynamic property" $gap={8}>
        <Icon name="minus" />
      </IconButton>
      <IconButton aria-label="Configure" $gap={8}>
        <Icon name="wrench" />
        <DropMark />
      </IconButton>
    </PropToolbar>
    <ObjectLine>pushButtonLogin : QPushButton</ObjectLine>
    <ScrollFrame $h={297}>
      <TableArea>
        <DataTable>
          <colgroup>
            <col width="150" />
            <col />
          </colgroup>
          <thead>
            <tr>
              <HeadCell><span>属性</span></HeadCell>
              <HeadCell><span>值</span></HeadCell>
            </tr>
          </thead>
          <tbody>
            {PROPS.map((row, i) => {
              if (row.group) {
                return (
                  <PropRow key={row.group}>
                    <GroupCell colSpan={2}>
                      <Inline $pad={2}>
                        <Chevron color="#222" />
                        {row.group}
                      </Inline>
                    </GroupCell>
                  </PropRow>
                );
              }
              const [edge, tint] = propTint(row, i);
              return (
                <PropRow key={row.name}>
                  <PropName $edge={edge} $tint={tint} $bold={row.bold}>
                    <PropInner>
                      <PropArrow>{row.sub && <Chevron dir="right" color="#a3a375" />}</PropArrow>
                      {row.name}
                    </PropInner>
                  </PropName>
                  <PropValue $tint={tint}>
                    {row.check ? <CheckInput type="checkbox" defaultChecked aria-label="enabled" /> : row.value}
                  </PropValue>
                </PropRow>
              );
            })}
            <PartialRow>
              <td colSpan={2} />
            </PartialRow>
          </tbody>
        </DataTable>
      </TableArea>
      <Scroll color="#505050" thumb />
    </ScrollFrame>
  </Dock>
);

const ResourceBrowser = () => (
  <Dock $grow>
    <DockHeader title="资源浏览器" />
    <ResToolbar>
      <IconButton aria-label="Edit resources"><Icon name="pencil" /></IconButton>
      <IconButton aria-label="Reload"><Icon name="reload" size={20} /></IconButton>
      <ResFilterSlot>
        <Filter $grow placeholder="Filter" aria-label="Filter resources" />
      </ResFilterSlot>
    </ResToolbar>
    <Panes>
      <Pane $flex={383}>&lt;resource root&gt;</Pane>
      <Pane $flex={382} />
    </Panes>
    <Tabs>
      <Tab>信号/槽编辑器</Tab>
      <Tab>动作编辑器</Tab>
      <Tab $on>资源浏览器</Tab>
    </Tabs>
  </Dock>
);

export default function App() {
  return (
    <Screen>
      <GlobalStyle />
      <Gradients />
      <DesktopEdge>
        <EdgeClock>6</EdgeClock>
      </DesktopEdge>
      <Window>
        <TitleBar>
          <AppMark>D</AppMark>
          <AppTitle>Qt 设计师 - Qt Designer</AppTitle>
          <CaptionButton aria-label="Minimize">
            <svg width="12" height="12"><path d="M0 5.500h12" stroke="#fff" /></svg>
          </CaptionButton>
          <CaptionButton aria-label="Restore">
            <svg width="12" height="12">
              <path d="M2.500 2V0.500h9v9H10M0.500 2.500h9v9h-9z" fill="none" stroke="#fff" />
            </svg>
          </CaptionButton>
          <CaptionButton aria-label="Close">
            <svg width="12" height="12"><path d="M0 0l12 12M12 0L0 12" stroke="#fff" /></svg>
          </CaptionButton>
        </TitleBar>
        <MenuBar>
          {MENUS.map((m) => (
            <button key={m}>{m}</button>
          ))}
        </MenuBar>
        <ToolRow>
          {TOOLS.map((group, i) => (
            <ToolGroup key={group[0]} $last={i === TOOLS.length - 1}>
              <Grip />
              {group.map((t) => (
                <ToolButton key={t} $on={t === "editWidgets"} aria-label={t}>
                  <Icon name={t} />
                </ToolButton>
              ))}
            </ToolGroup>
          ))}
        </ToolRow>
        <Body>
          <WidgetPalette />
          <Mdi>
            <FormWindow />
          </Mdi>
          <RightColumn>
            <ObjectInspector />
            <PropertyEditor />
            <ResourceBrowser />
          </RightColumn>
        </Body>
        <StatusBar />
        <Watermark>CSDN @YYDataV</Watermark>
      </Window>
    </Screen>
  );
}
